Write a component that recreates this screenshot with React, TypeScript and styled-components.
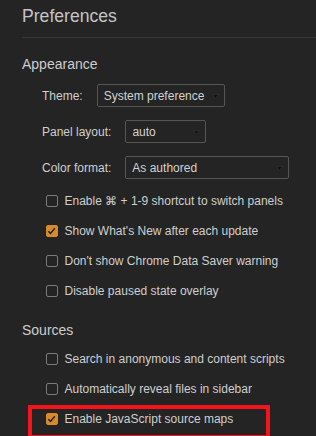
import React from "react";
import styled, { createGlobalStyle } from "styled-components";

const Global = createGlobalStyle`
  html, body { margin: 0; padding: 0; background: #242424; }
  body { font-family: "Liberation Sans", Arial, Helvetica, sans-serif; }
  * { box-sizing: border-box; }
`;

const Page = styled.div`
  width: 316px;
  height: 436px;
  overflow: hidden;
  background: #242424;
  padding-left: 22px;
  color: #cfcfcf;
`;

const Header = styled.h1`
  margin: 0;
  padding: 6px 0 10px;
  font-size: 17.6px;
  line-height: 21px;
  font-weight: 400;
  color: #c4c4c4;
  border-bottom: 1px solid #383838;
`;

const Section = styled.section<{ $top: number }>`
  margin-top: ${(p) => p.$top}px;
  display: flex;
  flex-direction: column;
`;

const SectionTitle = styled.h2`
  margin: 0;
  font-size: 14px;
  line-height: 20px;
  font-weight: 400;
  color: #cdcdcd;
`;

const Field = styled.div<{ $top: number }>`
  display: flex;
  align-items: center;
  gap: 14px;
  height: 23px;
  margin-top: ${(p) => p.$top}px;
  padding-left: 20px;
  font-size: 12px;
  color: #cfcfcf;
`;

const Label = styled.span`
  white-space: nowrap;
`;

const Select = styled.div<{ $w: number }>`
  position: relative;
  display: flex;
  align-items: center;
  width: ${(p) => p.$w}px;
  height: 23px;
  padding-left: 6px;
  border: 1px solid #555555;
  border-radius: 2px;
  font-size: 12px;
  color: #d2d2d2;
  white-space: nowrap;
`;

const Arrow = styled.svg`
  position: absolute;
  right: 5px;
  top: 9px;
`;

const Check = styled.label<{ $top: number; $highlight?: boolean }>`
  position: relative;
  display: flex;
  align-items: center;
  height: 20px;
  margin-top: ${(p) => p.$top}px;
  padding-left: 24px;
  font-size: 12px;
  color: #cfcfcf;
  white-space: nowrap;
  ${(p) =>
    p.$highlight
      ? `&::after {
    content: "";
    position: absolute;
    left: 6px;
    top: -4px;
    width: 234px;
    height: 26px;
    border: 4.5px solid #f4141b;
  }`
      : ""}
`;

const Box = styled.span<{ $checked?: boolean }>`
  display: inline-flex;
  align-items: center;
  justify-content: center;
  width: 11.5px;
  height: 11.5px;
  margin-right: 7px;
  border-radius: 2px;
  border: 1px solid ${(p) => (p.$checked ? "#d8892c" : "#7a7a7a")};
  background: ${(p) => (p.$checked ? "#d8892c" : "transparent")};
  flex: none;
`;

const Tick = () => (
  <svg width="9" height="8" viewBox="0 0 9 8">
    <path d="M1.3 4.2 L3.5 6.4 L7.8 1.3" fill="none" stroke="#2a2118" strokeWidth="1.5" />
  </svg>
);

const Caret = () => (
  <Arrow width="7" height="5" viewBox="0 0 7 5">
    <path d="M0.5 0.8 L6.5 0.8 L3.5 4.2 Z" fill="#0d0d0d" stroke="#3a3a3a" strokeWidth="0.6" />
  </Arrow>
);

function CheckRow({ text, checked, top, highlight }: { text: string; checked?: boolean; top: number; highlight?: boolean }) {
  return (
    <Check $top={top} $highlight={highlight}>
      <Box $checked={checked}>{checked ? <Tick /> : null}</Box>
      {text}
    </Check>
  );
}

export default function App() {
  return (
    <>
      <Global />
      <Page>
        <Header>Preferences</Header>
        <Section $top={16}>
          <SectionTitle>Appearance</SectionTitle>
          <Field $top={10}>
            <Label>Theme:</Label>
            <Select $w={128}>
              System preference
              <Caret />
            </Select>
          </Field>
          <Field $top={13}>
            <Label>Panel layout:</Label>
            <Select $w={81}>
              auto
              <Caret />
            </Select>
          </Field>
          <Field $top={13}>
            <Label>Color format:</Label>
            <Select $w={164}>
              As authored
              <Caret />
            </Select>
          </Field>
          <CheckRow top={12} text="Enable ⌘ + 1-9 shortcut to switch panels" />
          <CheckRow top={10} checked text="Show What's New after each update" />
          <CheckRow top={10} text="Don't show Chrome Data Saver warning" />
          <CheckRow top={10} text="Disable paused state overlay" />
        </Section>
        <Section $top={19}>
          <SectionTitle>Sources</SectionTitle>
          <CheckRow top={9} text="Search in anonymous and content scripts" />
          <CheckRow top={10} text="Automatically reveal files in sidebar" />
          <CheckRow top={10} checked highlight text="Enable JavaScript source maps" />
        </Section>
      </Page>
    </>
  );
}
